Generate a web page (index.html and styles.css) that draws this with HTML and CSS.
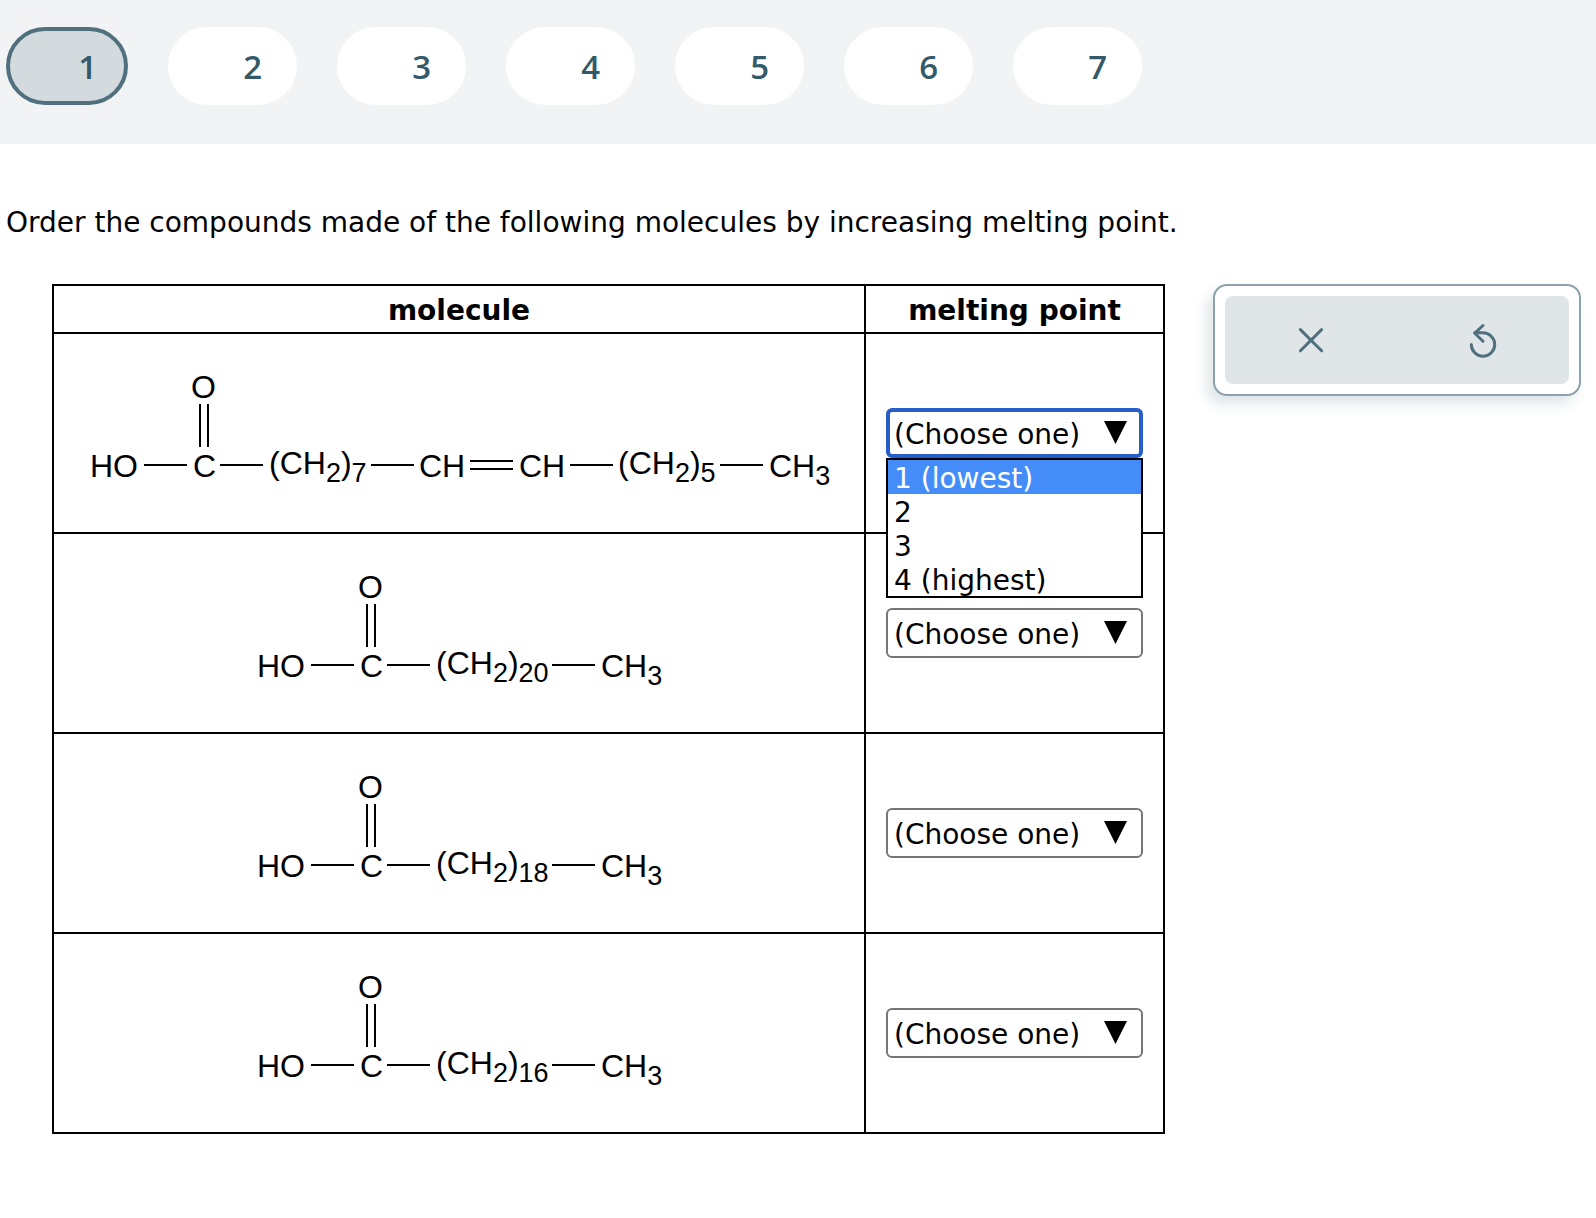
FILE: index.html
```html
<!DOCTYPE html>
<html lang="en">
<head>
    <meta charset="UTF-8">
    <meta name="viewport" content="width=device-width, initial-scale=1.0">
    <title>Melting point order</title>
    <link rel="stylesheet" href="styles.css">
</head>
<body>
    <nav class="question-nav">
        <button type="button" class="question-button active" aria-current="step">1</button>
        <button type="button" class="question-button">2</button>
        <button type="button" class="question-button">3</button>
        <button type="button" class="question-button">4</button>
        <button type="button" class="question-button">5</button>
        <button type="button" class="question-button">6</button>
        <button type="button" class="question-button">7</button>
    </nav>
    <main class="question">
        <p class="prompt">Order the compounds made of the following molecules by increasing melting point.</p>
        <div class="answer-area">
            <table class="answer-table">
                <thead>
                    <tr>
                        <th>molecule</th>
                        <th>melting point</th>
                    </tr>
                </thead>
                <tbody>
                    <tr>
                        <td class="molecule-cell">
                            <svg class="molecule" width="742" height="138" viewBox="0 -10 742 138">
                                <text x="103" y="24">O</text>
                                <path d="M112 30v43M120 30v43"/>
                                <text x="2" y="103">HO</text>
                                <path d="M56 91h43"/>
                                <text x="105" y="103">C</text>
                                <path d="M132 91h43"/>
                                <text x="181" y="100">(CH<tspan class="sub" dy="8">2</tspan><tspan dy="-8">)</tspan><tspan class="sub" dy="8">7</tspan></text>
                                <path d="M283 91h43"/>
                                <text x="331" y="103">CH</text>
                                <path d="M382 87h43M382 95h43"/>
                                <text x="431" y="103">CH</text>
                                <path d="M482 91h43"/>
                                <text x="530" y="100">(CH<tspan class="sub" dy="8">2</tspan><tspan dy="-8">)</tspan><tspan class="sub" dy="8">5</tspan></text>
                                <path d="M632 91h43"/>
                                <text x="681" y="103">CH<tspan class="sub" dy="8">3</tspan></text>
                            </svg>
                        </td>
                        <td class="choice-cell">
                            <div class="select-box open">
                                <select id="choice1" aria-label="Melting point of molecule 1">
                                    <option>(Choose one)</option>
                                    <option>1 (lowest)</option>
                                    <option>2</option>
                                    <option>3</option>
                                    <option>4 (highest)</option>
                                </select>
                                <ul class="options" role="listbox" aria-label="Melting point">
                                    <li class="highlighted" role="option" aria-selected="true">1 (lowest)</li>
                                    <li role="option">2</li>
                                    <li role="option">3</li>
                                    <li role="option">4 (highest)</li>
                                </ul>
                            </div>
                        </td>
                    </tr>
                    <tr>
                        <td class="molecule-cell">
                            <svg class="molecule" width="408" height="138" viewBox="0 -10 408 138">
                                <text x="103" y="24">O</text>
                                <path d="M112 30v43M120 30v43"/>
                                <text x="2" y="103">HO</text>
                                <path d="M56 91h43"/>
                                <text x="105" y="103">C</text>
                                <path d="M132 91h43"/>
                                <text x="181" y="100">(CH<tspan class="sub" dy="8">2</tspan><tspan dy="-8">)</tspan><tspan class="sub" dy="8">20</tspan></text>
                                <path d="M297 91h43"/>
                                <text x="346" y="103">CH<tspan class="sub" dy="8">3</tspan></text>
                            </svg>
                        </td>
                        <td class="choice-cell">
                            <div class="select-box">
                                <select id="choice2" aria-label="Melting point of molecule 2">
                                    <option>(Choose one)</option>
                                    <option>1 (lowest)</option>
                                    <option>2</option>
                                    <option>3</option>
                                    <option>4 (highest)</option>
                                </select>
                            </div>
                        </td>
                    </tr>
                    <tr>
                        <td class="molecule-cell">
                            <svg class="molecule" width="408" height="138" viewBox="0 -10 408 138">
                                <text x="103" y="24">O</text>
                                <path d="M112 30v43M120 30v43"/>
                                <text x="2" y="103">HO</text>
                                <path d="M56 91h43"/>
                                <text x="105" y="103">C</text>
                                <path d="M132 91h43"/>
                                <text x="181" y="100">(CH<tspan class="sub" dy="8">2</tspan><tspan dy="-8">)</tspan><tspan class="sub" dy="8">18</tspan></text>
                                <path d="M297 91h43"/>
                                <text x="346" y="103">CH<tspan class="sub" dy="8">3</tspan></text>
                            </svg>
                        </td>
                        <td class="choice-cell">
                            <div class="select-box">
                                <select id="choice3" aria-label="Melting point of molecule 3">
                                    <option>(Choose one)</option>
                                    <option>1 (lowest)</option>
                                    <option>2</option>
                                    <option>3</option>
                                    <option>4 (highest)</option>
                                </select>
                            </div>
                        </td>
                    </tr>
                    <tr>
                        <td class="molecule-cell">
                            <svg class="molecule" width="408" height="138" viewBox="0 -10 408 138">
                                <text x="103" y="24">O</text>
                                <path d="M112 30v43M120 30v43"/>
                                <text x="2" y="103">HO</text>
                                <path d="M56 91h43"/>
                                <text x="105" y="103">C</text>
                                <path d="M132 91h43"/>
                                <text x="181" y="100">(CH<tspan class="sub" dy="8">2</tspan><tspan dy="-8">)</tspan><tspan class="sub" dy="8">16</tspan></text>
                                <path d="M297 91h43"/>
                                <text x="346" y="103">CH<tspan class="sub" dy="8">3</tspan></text>
                            </svg>
                        </td>
                        <td class="choice-cell">
                            <div class="select-box">
                                <select id="choice4" aria-label="Melting point of molecule 4">
                                    <option>(Choose one)</option>
                                    <option>1 (lowest)</option>
                                    <option>2</option>
                                    <option>3</option>
                                    <option>4 (highest)</option>
                                </select>
                            </div>
                        </td>
                    </tr>
                </tbody>
            </table>
            <div class="tool-panel">
                <div class="tools">
                    <button type="button" class="tool-button" aria-label="Clear">
                        <svg width="36" height="36" viewBox="0 0 36 36"><path d="M7.4 7.6l21.2 21.2M28.6 7.6L7.4 28.8"/></svg>
                    </button>
                    <button type="button" class="tool-button" aria-label="Undo">
                        <svg width="36" height="36" viewBox="0 0 36 36"><path d="M6.3 22.5a11.7 11.7 0 1 0 11.7-11.7H9.5M18 3.5L9.8 11.2L18 19.3"/></svg>
                    </button>
                </div>
            </div>
        </div>
    </main>
</body>
</html>
```
FILE: styles.css
```css
* {
    box-sizing: border-box;
}

body {
    margin: 0;
    background-color: #fff;
    color: #000;
    font-family: Verdana, "DejaVu Sans", sans-serif;
    font-size: 28px;
}

.question-nav {
    display: flex;
    gap: 40px;
    padding: 27px 6px 39px;
    background-color: #f1f3f5;
}

.question-button {
    width: 129px;
    height: 78px;
    padding: 0 31px 0 0;
    border: 4px solid #fff;
    border-radius: 39px;
    background-color: #fff;
    color: #345a69;
    font-family: "Open Sans", sans-serif;
    font-size: 33px;
    font-weight: 600;
    text-align: right;
}

.question-button.active {
    width: 122px;
    padding-right: 27px;
    border-color: #50707e;
    background-color: #d3dbdf;
}

.prompt {
    margin: 0;
    padding: 62px 6px 44px;
    line-height: 34px;
}

.answer-area {
    display: flex;
    align-items: flex-start;
    gap: 48px;
    padding: 0 15px 84px 52px;
}

.answer-table {
    border-collapse: collapse;
}

.answer-table th,
.answer-table td {
    border: 2px solid #000;
}

.answer-table th {
    padding: 8px 6px 4px;
    line-height: 34px;
}

.answer-table .molecule-cell {
    padding: 30px 34px;
}

.answer-table .choice-cell {
    padding: 0 20px;
}

.molecule {
    display: block;
    margin: 0 auto;
    font-family: "Liberation Sans", Arial, sans-serif;
    font-size: 32px;
}

.molecule path {
    stroke: #000;
    stroke-width: 2;
}

.molecule .sub {
    font-size: 27px;
}

.select-box {
    position: relative;
    width: 257px;
}

.select-box select {
    display: block;
    appearance: none;
    width: 100%;
    height: 50px;
    padding: 2px 6px 0;
    border: 2px solid #767676;
    border-radius: 6px;
    background-color: #fff;
    color: #000;
    font: inherit;
}

/* drop-down arrow */
.select-box::after {
    content: "";
    position: absolute;
    top: 13px;
    right: 16px;
    width: 23px;
    height: 23px;
    background-color: #000;
    clip-path: polygon(0 0, 100% 0, 50% 100%);
    pointer-events: none;
}

.select-box.open select {
    padding: 2px 4px 0;
    border: 4px solid #285ec8;
}

.options {
    position: absolute;
    top: 100%;
    left: 0;
    z-index: 1;
    width: 100%;
    margin: 0;
    padding: 0;
    border: 2px solid #000;
    background-color: #fff;
    list-style: none;
}

.options li {
    padding: 4px 6px 0;
    line-height: 30px;
}

.options .highlighted {
    background-color: #448df8;
    color: #fff;
}

.tool-panel {
    flex: 1;
    padding: 10px;
    border: 2px solid #8ba1ab;
    border-radius: 14px;
    background-color: #fff;
    box-shadow: -6px 8px 14px #dfe5e8;
}

.tools {
    display: flex;
    border-radius: 8px;
    background-color: #e0e5e8;
}

.tool-button {
    flex: 1;
    height: 88px;
    padding: 0;
    border: none;
    background: none;
}

.tool-button svg {
    display: block;
    margin: 0 auto;
}

.tool-button path {
    fill: none;
    stroke: #50707e;
    stroke-width: 3;
    stroke-linecap: round;
    stroke-linejoin: round;
}
```
